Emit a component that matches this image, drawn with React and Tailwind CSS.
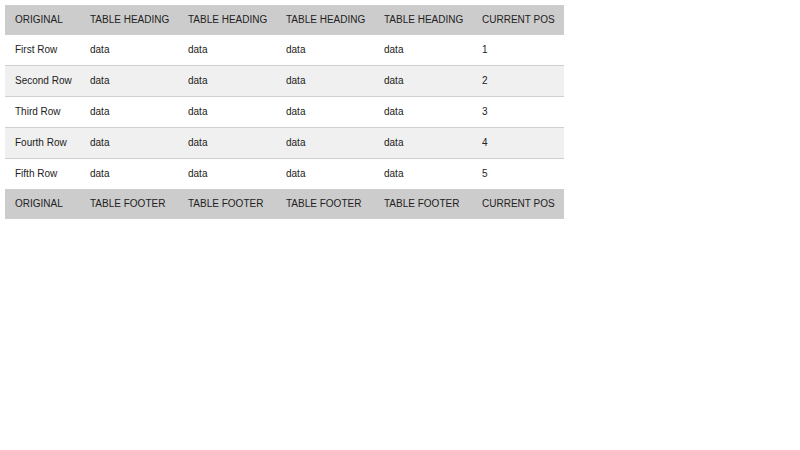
export default function App() {
  const widths = ["w-[75px]", "w-[98px]", "w-[98px]", "w-[98px]", "w-[98px]", "w-[92px]"];
  const rows = ["First Row", "Second Row", "Third Row", "Fourth Row", "Fifth Row"];
  const cell = "px-[10px] py-[10px] text-left font-normal whitespace-nowrap";
  return (
    <div className="p-[5px] bg-white min-h-[450px]" style={{ fontFamily: '"Liberation Sans", Arial, sans-serif' }}>
      <table className="border-collapse table-fixed w-[559px] text-[10px] leading-[10px] text-[#222]">
        <thead>
          <tr className="bg-[#cccccc]">
            {["ORIGINAL", "TABLE HEADING", "TABLE HEADING", "TABLE HEADING", "TABLE HEADING", "CURRENT POS"].map((h, i) => (
              <th key={i} className={`${cell} ${widths[i]}`}>{h}</th>
            ))}
          </tr>
        </thead>
        <tbody>
          {rows.map((r, i) => (
            <tr key={i} className={`${i % 2 === 1 ? "bg-[#f0f0f0]" : "bg-white"} ${i < 4 ? "border-b border-[#cfcfcf]" : ""}`}>
              <td className={cell}>{r}</td>
              <td className={cell}>data</td>
              <td className={cell}>data</td>
              <td className={cell}>data</td>
              <td className={cell}>data</td>
              <td className={cell}>{i + 1}</td>
            </tr>
          ))}
        </tbody>
        <tfoot>
          <tr className="bg-[#cccccc]">
            {["ORIGINAL", "TABLE FOOTER", "TABLE FOOTER", "TABLE FOOTER", "TABLE FOOTER", "CURRENT POS"].map((h, i) => (
              <td key={i} className={cell}>{h}</td>
            ))}
          </tr>
        </tfoot>
      </table>
    </div>
  );
}
